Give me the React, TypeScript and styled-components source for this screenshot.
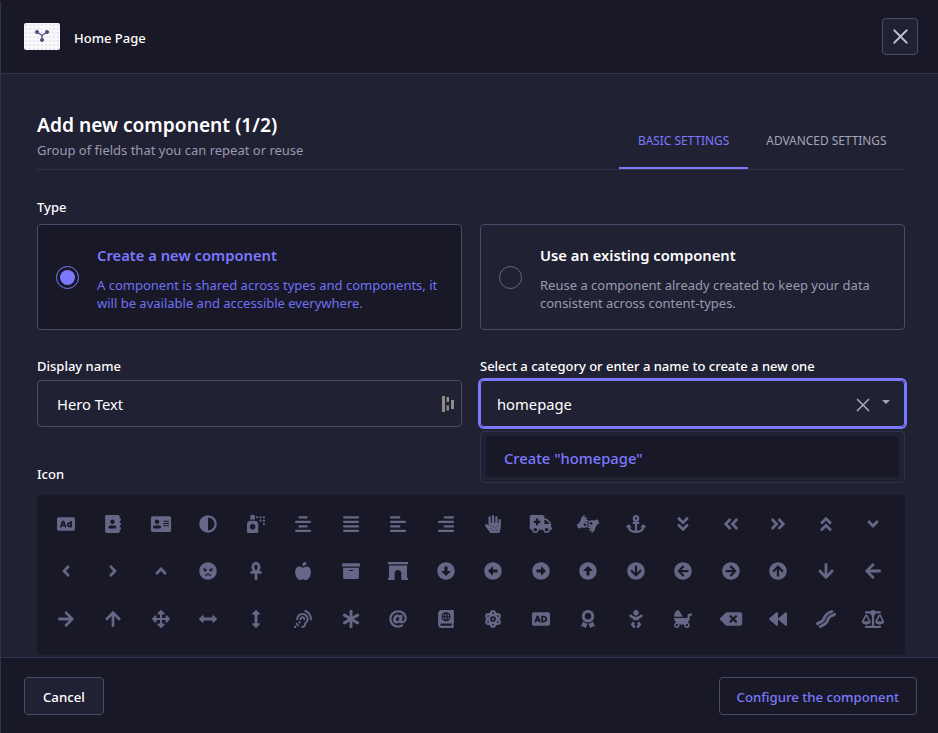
import React from 'react';
import styled, { createGlobalStyle } from 'styled-components';
import { X } from 'lucide-react';
import {
  FaAd, FaAddressBook, FaAddressCard, FaAdjust, FaSprayCan, FaAlignCenter, FaAlignJustify, FaAlignLeft, FaAlignRight,
  FaAllergies, FaAmbulance, FaAmericanSignLanguageInterpreting, FaAnchor, FaAngleDoubleDown, FaAngleDoubleLeft,
  FaAngleDoubleRight, FaAngleDoubleUp, FaAngleDown, FaAngleLeft, FaAngleRight, FaAngleUp, FaAngry, FaAnkh, FaAppleAlt,
  FaArchive, FaArchway, FaArrowAltCircleDown, FaArrowAltCircleLeft, FaArrowAltCircleRight, FaArrowAltCircleUp,
  FaArrowCircleDown, FaArrowCircleLeft, FaArrowCircleRight, FaArrowCircleUp, FaArrowDown, FaArrowLeft, FaArrowRight,
  FaArrowUp, FaArrowsAlt, FaArrowsAltH, FaArrowsAltV, FaAssistiveListeningSystems, FaAsterisk, FaAt, FaAtlas, FaAtom,
  FaAudioDescription, FaAward, FaBaby, FaBabyCarriage, FaBackspace, FaBackward, FaBacon, FaBalanceScale,
} from 'react-icons/fa';

const icons = [
  FaAd, FaAddressBook, FaAddressCard, FaAdjust, FaSprayCan, FaAlignCenter, FaAlignJustify, FaAlignLeft, FaAlignRight,
  FaAllergies, FaAmbulance, FaAmericanSignLanguageInterpreting, FaAnchor, FaAngleDoubleDown, FaAngleDoubleLeft,
  FaAngleDoubleRight, FaAngleDoubleUp, FaAngleDown, FaAngleLeft, FaAngleRight, FaAngleUp, FaAngry, FaAnkh, FaAppleAlt,
  FaArchive, FaArchway, FaArrowAltCircleDown, FaArrowAltCircleLeft, FaArrowAltCircleRight, FaArrowAltCircleUp,
  FaArrowCircleDown, FaArrowCircleLeft, FaArrowCircleRight, FaArrowCircleUp, FaArrowDown, FaArrowLeft, FaArrowRight,
  FaArrowUp, FaArrowsAlt, FaArrowsAltH, FaArrowsAltV, FaAssistiveListeningSystems, FaAsterisk, FaAt, FaAtlas, FaAtom,
  FaAudioDescription, FaAward, FaBaby, FaBabyCarriage, FaBackspace, FaBackward, FaBacon, FaBalanceScale,
];

const GlobalStyle = createGlobalStyle`
  * { box-sizing: border-box; }
  html, body { margin: 0; height: 100%; background: #181826; }
  body { font-family: "Noto Sans", "Open Sans", sans-serif; overflow: hidden; }
`;

const Modal = styled.div`
  width: 938px;
  height: 733px;
  display: flex;
  flex-direction: column;
  background: #212134;
  border-left: 1px solid #32324d;
  border-top-left-radius: 4px;
`;

const Header = styled.header`
  height: 74px;
  flex: none;
  display: flex;
  align-items: center;
  justify-content: space-between;
  padding: 0 20px 0 23px;
  background: #181826;
  border-bottom: 1px solid #32324d;
`;

const Crumb = styled.div`
  display: flex;
  align-items: center;
  gap: 14px;
  color: #ffffff;
  font-size: 13px;
  font-weight: 500;
  line-height: 28px;
  padding-top: 2px;
`;

const Logo = styled.div`
  width: 36px;
  height: 27px;
  margin-top: -3px;
  display: flex;
  align-items: center;
  justify-content: center;
  background-color: #f8f8fb;
  background-image: radial-gradient(#dcdcea 0.6px, transparent 0.9px);
  background-size: 4px 4px;
  border-radius: 2px;
`;

const CloseButton = styled.button`
  width: 36px;
  height: 37px;
  padding: 0;
  display: flex;
  align-items: center;
  justify-content: center;
  background: #212134;
  border: 1px solid #4a4a6a;
  border-radius: 4px;
  color: #c0c0cf;
`;

const Body = styled.main`
  flex: 1;
  min-height: 0;
  overflow: hidden;
  padding: 32px 33px 0 36px;
`;

const TitleRow = styled.div`
  display: flex;
  justify-content: space-between;
  border-bottom: 1px solid #32324d;
  height: 64px;
`;

const Title = styled.h1`
  margin: 0;
  color: #ffffff;
  font-size: 19.2px;
  line-height: 24px;
  font-weight: 600;
  padding-top: 7px;
`;

const Subtitle = styled.p`
  margin: 0;
  color: #9a9ab0;
  font-size: 13px;
  line-height: 16px;
  padding-top: 5px;
`;

const Tabs = styled.div`
  display: flex;
`;

const Tab = styled.div<{ $active?: boolean }>`
  padding: 6px 18.5px 0;
  height: 63px;
  display: flex;
  align-items: center;
  font-size: 11.9px;
  text-transform: uppercase;
  color: ${props => (props.$active ? '#7b79ff' : '#a5a5ba')};
  border-bottom: 2px solid ${props => (props.$active ? '#7b79ff' : 'transparent')};
`;

const Label = styled.div`
  color: #ffffff;
  font-size: 13px;
  line-height: 16px;
  font-weight: 500;
`;

const TypeLabel = styled(Label)`
  margin: 29px 0 9px;
`;

const FieldLabel = styled(Label)`
  margin-bottom: 6px;
`;

const IconLabel = styled(Label)`
  margin: 39px 0 13px;
`;

const TwoCols = styled.div`
  display: grid;
  grid-template-columns: 425px 425px;
  gap: 18px;
`;

const TypeCard = styled.div<{ $selected?: boolean }>`
  height: 106px;
  display: flex;
  align-items: center;
  gap: 18px;
  padding: 0 18px;
  background: ${props => (props.$selected ? '#181826' : 'transparent')};
  border: 1px solid #4a4a6a;
  border-radius: 4px;
`;

const Radio = styled.span<{ $selected?: boolean }>`
  flex: none;
  width: 23px;
  height: 23px;
  border-radius: 50%;
  display: flex;
  align-items: center;
  justify-content: center;
  border: 1px solid ${props => (props.$selected ? '#7b79ff' : '#666687')};
  background: transparent;
  &::after {
    content: '';
    width: 15px;
    height: 15px;
    border-radius: 50%;
    background: ${props => (props.$selected ? '#7b79ff' : 'transparent')};
  }
`;

const CardBody = styled.div`
  padding-top: 3px;
`;

const CardTitle = styled.div<{ $selected?: boolean }>`
  font-size: 14.75px;
  line-height: 20px;
  font-weight: 600;
  margin-bottom: 11px;
  color: ${props => (props.$selected ? '#7b79ff' : '#ffffff')};
`;

const CardText = styled.div<{ $selected?: boolean }>`
  font-size: 13px;
  line-height: 18px;
  color: ${props => (props.$selected ? '#7270f5' : '#9a9ab0')};
`;

const FieldRow = styled(TwoCols)`
  margin-top: 28px;
  position: relative;
`;

const InputBox = styled.div<{ $focused?: boolean }>`
  height: 47px;
  display: flex;
  align-items: center;
  padding: 0 6px 0 19px;
  color: #ffffff;
  font-size: 14.75px;
  border: 1px solid #4a4a6a;
  border-radius: 4px;
  ${props => props.$focused && `
    border-color: #7b79ff;
    box-shadow: 0 0 0 2px #7b79ff;
    padding: 0 14px 0 16px;
  `}
`;

const InputValue = styled.span`
  flex: 1;
`;

const ClearIcon = styled(X)`
  margin-top: 2px;
  color: #a5a5ba;
`;

const Caret = styled.span`
  margin-left: 8px;
  width: 0;
  height: 0;
  margin-top: -4px;
  border-left: 4px solid transparent;
  border-right: 4px solid transparent;
  border-top: 4px solid #a5a5ba;
`;

const Menu = styled.div`
  position: absolute;
  top: 73px;
  right: 0;
  width: 425px;
  height: 52px;
  padding: 4px 5px;
  background: #212134;
  border: 1px solid #32324d;
  border-radius: 4px;
  z-index: 2;
`;

const MenuItem = styled.div`
  height: 41px;
  display: flex;
  align-items: center;
  padding: 2px 0 0 18px;
  background: #181826;
  border-radius: 4px;
  color: #7b79ff;
  font-size: 14.75px;
  font-weight: 500;
`;

const IconGrid = styled.div`
  display: grid;
  grid-template-columns: repeat(18, 47.5px);
  grid-auto-rows: 47.5px;
  height: 160px;
  overflow: hidden;
  padding: 5px 0 0 5px;
  background: #181826;
  border-radius: 4px;
`;

/* box wider than the widest glyph, so every icon fits by its 18px height */
const IconCell = styled.div`
  display: flex;
  align-items: center;
  justify-content: center;
  color: #666687;
  svg {
    width: 30px;
    height: 18px;
  }
`;

const Footer = styled.footer`
  height: 76px;
  flex: none;
  display: flex;
  align-items: center;
  justify-content: space-between;
  padding: 1px 21px 0 23px;
  background: #181826;
  border-top: 1px solid #32324d;
`;

const FooterButton = styled.button<{ $primary?: boolean }>`
  height: 38px;
  padding: 1px ${props => (props.$primary ? '17px' : '18px')} 0;
  font-family: inherit;
  font-size: 13.2px;
  font-weight: 500;
  border-radius: 4px;
  border: 1px solid #4a4a6a;
  background: ${props => (props.$primary ? 'transparent' : '#212134')};
  color: ${props => (props.$primary ? '#7b79ff' : '#ffffff')};
`;

const App: React.FC = () => (
  <>
    <GlobalStyle />
    <Modal>
      <Header>
        <Crumb>
          <Logo>
            <svg width="16" height="14" viewBox="0 0 16 14" fill="#55557f" stroke="#55557f">
              <circle cx="3" cy="3" r="1.6" />
              <circle cx="13" cy="3" r="1.6" />
              <circle cx="8" cy="11" r="1.6" />
              <path d="M3 3l5 3.5L13 3M8 6.5V11" fill="none" strokeWidth="1.4" />
            </svg>
          </Logo>
          Home Page
        </Crumb>
        <CloseButton aria-label="Close">
          <X size={25} strokeWidth={1.7} />
        </CloseButton>
      </Header>
      <Body>
        <TitleRow>
          <div>
            <Title>Add new component (1/2)</Title>
            <Subtitle>Group of fields that you can repeat or reuse</Subtitle>
          </div>
          <Tabs>
            <Tab $active>Basic settings</Tab>
            <Tab>Advanced settings</Tab>
          </Tabs>
        </TitleRow>
        <TypeLabel>Type</TypeLabel>
        <TwoCols>
          <TypeCard $selected>
            <Radio $selected />
            <CardBody>
              <CardTitle $selected>Create a new component</CardTitle>
              <CardText $selected>
                A component is shared across types and components, it will be available and accessible everywhere.
              </CardText>
            </CardBody>
          </TypeCard>
          <TypeCard>
            <Radio />
            <CardBody>
              <CardTitle>Use an existing component</CardTitle>
              <CardText>Reuse a component already created to keep your data consistent across content-types.</CardText>
            </CardBody>
          </TypeCard>
        </TwoCols>
        <FieldRow>
          <div>
            <FieldLabel>Display name</FieldLabel>
            <InputBox>
              <InputValue>Hero Text</InputValue>
              <svg width="13" height="16" viewBox="0 0 13 16" fill="#8e8a8a">
                <rect x="0" y="0" width="3" height="16" />
                <rect x="4.5" y="1" width="2.5" height="5" />
                <rect x="4.5" y="9.5" width="2.5" height="5" />
                <rect x="9" y="4" width="3" height="9" />
              </svg>
            </InputBox>
          </div>
          <div>
            <FieldLabel>Select a category or enter a name to create a new one</FieldLabel>
            <InputBox $focused>
              <InputValue>homepage</InputValue>
              <ClearIcon size={22} strokeWidth={1.8} />
              <Caret />
            </InputBox>
          </div>
          <Menu>
            <MenuItem>Create "homepage"</MenuItem>
          </Menu>
        </FieldRow>
        <IconLabel>Icon</IconLabel>
        <IconGrid>
          {icons.map((Icon, i) => (
            <IconCell key={i}>
              <Icon />
            </IconCell>
          ))}
        </IconGrid>
      </Body>
      <Footer>
        <FooterButton>Cancel</FooterButton>
        <FooterButton $primary>Configure the component</FooterButton>
      </Footer>
    </Modal>
  </>
);

export default App;
